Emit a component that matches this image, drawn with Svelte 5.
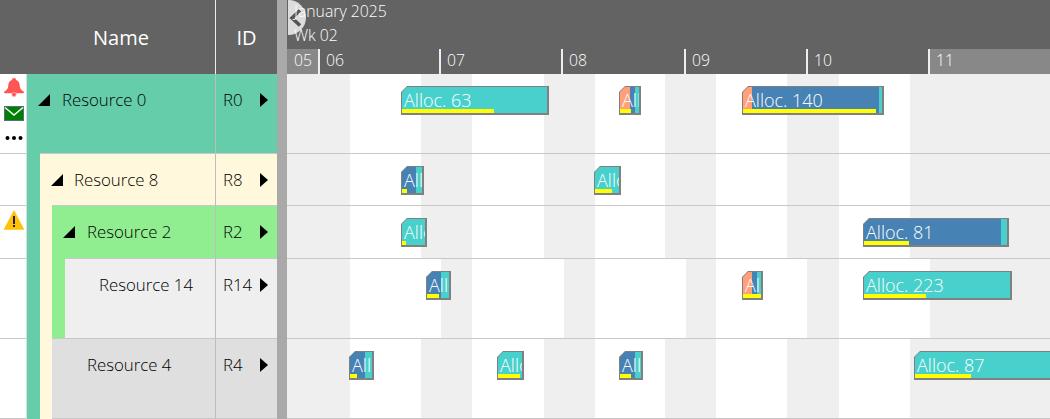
<script>
  const S = [[0, 63], [134, 51], [257, 51], [378, 51], [500, 52], [623, 140]];
  const S14 = [[0, 63], [154, 31], [277, 31], [399, 30], [520, 32], [643, 120]];
  const O = 287;
  const bar = (x, x2, label, prog, segs) => ({ x, w: x2 - x, label, prog, segs });
  const T = '#48d1cc', B = '#4682b4', P = '#ffa07a';
  const rows = [
    { name: 'Resource 0', id: 'R0', h: 79, cls: 'aqua', tree: true, bands: [], stripes: S, icons: true,
      bars: [bar(401, 549, 'Alloc. 63', 92, [[146, T]]),
             bar(619, 641, 'Alloc. 12', 11, [[10, P], [5, B], [4, T]]),
             bar(742, 884, 'Alloc. 140', 133, [[9, P], [127, B], [4, T]])] },
    { name: 'Resource 8', id: 'R8', h: 52, cls: 'silk', tree: true, bands: ['aqua'], stripes: S,
      bars: [bar(401, 424, 'Alloc. 7', 5, [[14, B], [7, T]]),
             bar(594, 621, 'Alloc. 24', 17, [[25, T]])] },
    { name: 'Resource 2', id: 'R2', h: 53, cls: 'green', tree: true, bands: ['aqua', 'silk'], warn: true, stripes: S,
      bars: [bar(401, 427, 'Alloc. 3', 4, [[24, T]]),
             bar(863, 1009, 'Alloc. 81', 45, [[137, B], [7, T]])] },
    { name: 'Resource 14', id: 'R14', h: 80, cls: 'light', bands: ['aqua', 'silk', 'green'], stripes: S14,
      bars: [bar(426, 451, 'Alloc. 11', 12, [[14, B], [8, T]]),
             bar(742, 763, 'Alloc. 19', 18, [[9, P], [5, B], [4, T]]),
             bar(863, 1012, 'Alloc. 223', 62, [[147, T]])] },
    { name: 'Resource 4', id: 'R4', h: 81, cls: 'mid', bands: ['aqua', 'silk'], stripes: S,
      bars: [bar(349, 374, 'Alloc. 6', 7, [[15, B], [8, T]]),
             bar(497, 524, 'Alloc. 31', 22, [[25, T]]),
             bar(619, 643, 'Alloc. 10', 11, [[15, B], [7, T]]),
             bar(914, 1080, 'Alloc. 87', 56, [[164, T]])] }
  ];
  const days = [
    { t: '05', w: 33, cur: true }, { t: '06', w: 121 }, { t: '07', w: 122 }, { t: '08', w: 123 },
    { t: '09', w: 122 }, { t: '10', w: 122 }, { t: '11', w: 120, cur: true }
  ];
</script>

<div class="gantt">
  <div class="tree">
    <div class="head">
      <div class="h-gap"></div>
      <div class="h-name">Name</div>
      <div class="h-id">ID</div>
    </div>
    {#each rows as r}
      <div class="row" style="height:{r.h}px">
        <div class="alerts">
          {#if r.icons}
            <svg class="bell" viewBox="0 0 20 19" width="20" height="19">
              <path d="M10 0c1.300 0 2 .8 2.100 2 2.500.8 3.400 2.700 3.600 5.200.2 2.700 1 4.700 3.800 6.300.4.300.5.8.5 1.500H0c0-.7.100-1.200.5-1.500 2.800-1.600 3.600-3.600 3.800-6.300.2-2.500 1.100-4.400 3.600-5.200C8 .8 8.700 0 10 0z" fill="#ff5555"/>
              <path d="M1 15.500h18" stroke="#ffc8c8" stroke-width="0.800"/>
              <circle cx="10" cy="16.500" r="2.200" fill="#ff5555" stroke="#ffc8c8" stroke-width="0.600"/>
            </svg>
            <svg class="mail" viewBox="0 0 20 15" width="20" height="15">
              <rect x="0.500" y="0.500" width="19" height="14" fill="#008000" stroke="#5a6a8a"/>
              <path d="M1 1.500l9 7.500 9-7.500" fill="none" stroke="#fff" stroke-width="1.500"/>
            </svg>
            <svg class="dots" viewBox="0 0 18 4" width="18" height="4">
              <circle cx="2.500" cy="2" r="2"/><circle cx="9" cy="2" r="2"/><circle cx="15.500" cy="2" r="2"/>
            </svg>
          {/if}
          {#if r.warn}
            <svg class="warn" viewBox="0 0 20 20" width="20" height="20">
              <path d="M10 .5L20 19.500H0z" fill="#ffc107" stroke="#ffc107" stroke-width="0.500" stroke-linejoin="round"/>
              <rect x="9" y="6" width="2" height="8" fill="#222"/>
              <rect x="9" y="15" width="2" height="2" fill="#222"/>
            </svg>
          {/if}
        </div>
        {#each r.bands as b}
          <div class="band {b}"></div>
        {/each}
        <div class="name {r.cls}">
          <span class="tri" class:none={!r.tree}></span>
          <span class="label">{r.name}</span>
        </div>
        <div class="id {r.cls}">
          <span class="idt">{r.id}</span>
          <span class="arrow"></span>
        </div>
      </div>
    {/each}
  </div>
  <div class="split"></div>
  <div class="chart">
    <div class="time">
      <div class="collapse">
        <svg viewBox="0 0 12 18" width="12" height="18"><path d="M11 1.500L3 9l8 7.500" fill="none" stroke="#555" stroke-width="3.500"/></svg>
      </div>
      <div class="t1">January 2025</div>
      <div class="t2">Wk 02</div>
      <div class="t3">
        {#each days as d}
          <div class="day" class:cur={d.cur} style="width:{d.w}px">{d.t}</div>
        {/each}
      </div>
    </div>
    {#each rows as r}
      <div class="lane" style="height:{r.h}px">
        {#each r.stripes as s}
          <div class="stripe" style="left:{s[0]}px;width:{s[1]}px"></div>
        {/each}
        {#each r.bars as b}
          <div class="bar" style="left:{b.x - O}px;width:{b.w}px">
            <div class="fill">
              {#each b.segs as sg}
                <i style="width:{sg[0]}px;background:{sg[1]}"></i>
              {/each}
              <span class="txt">{b.label}</span>
              <b class="prog" style="width:{b.prog}px"></b>
            </div>
          </div>
        {/each}
      </div>
    {/each}
  </div>
</div>

<style>
  :global(body) { margin: 0; background: #fff; overflow: hidden; }
  .gantt { display: flex; width: 1050px; height: 419px; overflow: hidden; font-family: "Open Sans", "Noto Sans", sans-serif; font-weight: 350; font-size: 16.800px; color: #000; }
  .tree { width: 277px; flex: none; }
  .split { width: 10px; flex: none; background: #a9a9a9; }
  .chart { width: 763px; flex: none; position: relative; overflow: hidden; }

  .head { height: 74px; display: flex; background: #636363; color: #fff; font-size: 20px; font-weight: 400; }
  .h-gap { width: 27px; }
  .h-name { width: 189px; box-sizing: border-box; display: flex; align-items: center; justify-content: center; border-right: 1px solid #eee; }
  .h-id { flex: 1; display: flex; align-items: center; justify-content: center; }

  .row { display: flex; }
  .row > * { box-sizing: border-box; }
  .row + .row > :not(.band) { border-top: 1px solid #c8c8c8; }
  .row:last-child > :not(.band) { border-bottom: 1px solid #c8c8c8; }
  .alerts { width: 27px; flex: none; background: #fff; border-right: 1px solid #ddd; padding-left: 1px; display: flex; flex-direction: column; align-items: center; }
  .bell { margin-top: 4px; display: block; flex: none; }
  .mail { margin-top: 9px; display: block; flex: none; }
  .dots { margin-top: 15px; display: block; flex: none; }
  .warn { margin-top: 4px; display: block; flex: none; }
  .band { width: 13px; flex: none; }
  .band:nth-of-type(3) { width: 12px; }
  .aqua { background: #66cdaa; }
  .silk { background: #fff8dc; }
  .green { background: #90ee90; }
  .light { background: #efefef; }
  .mid { background: #dfdfdf; }

  .name { flex: 1; min-width: 0; display: flex; align-items: flex-start; padding: 15px 0 0 11px; border-right: 1px solid #bdbdbd; }
  .tri { width: 0; height: 0; border-style: solid; border-width: 0 0 12px 12px; border-color: transparent transparent #000 transparent; margin: 5px 12px 0 0; flex: none; }
  .tri.none { border-color: transparent; }
  .label { line-height: 22px; white-space: nowrap; }
  .silk .label, .light .label { margin-left: -1px; }
  .id { width: 61px; flex: none; display: flex; align-items: flex-start; justify-content: space-between; padding: 15px 9px 0 7px; }
  .idt { line-height: 22px; }
  .arrow { width: 0; height: 0; border-style: solid; border-width: 7px 0 7px 8px; border-color: transparent transparent transparent #000; margin-top: 4px; flex: none; }

  .time { height: 74px; background: #636363; color: #fff; font-size: 15.800px; position: relative; }
  .t1 { height: 25px; line-height: 23px; padding-left: 7px; position: relative; }
  .t2 { height: 24px; line-height: 20px; padding-left: 7px; position: relative; }
  .t3 { height: 25px; display: flex; }
  .day { line-height: 22px; padding-left: 6px; box-sizing: border-box; border-right: 2px solid #eee; flex: none; }
  .day:first-child { padding-left: 7px; }
  .day:last-child { border-right: 0; }
  .day.cur { background: #888; }
  .collapse { position: absolute; left: 1px; top: 0; width: 18px; height: 35px; background: #dcdcdc; border-radius: 0 18px 18px 0; display: flex; align-items: center; }
  .collapse svg { margin-left: 1px; }

  .lane { position: relative; box-sizing: border-box; }
  .lane + .lane { border-top: 1px solid #c8c8c8; }
  .lane:last-child { border-bottom: 1px solid #c8c8c8; }
  .stripe { position: absolute; top: 0; bottom: 0; background: #efefef; }
  .bar { position: absolute; top: 12px; height: 29px; background: #808080; clip-path: polygon(6px 0, 100% 0, 100% 100%, 0 100%, 0 6px); }
  .fill { position: absolute; inset: 1px 2px 2px 1px; display: flex; overflow: hidden; clip-path: polygon(5px 0, 100% 0, 100% 100%, 0 100%, 0 5px); }
  .fill i { display: block; height: 100%; flex: none; }
  .txt { position: absolute; left: 2px; top: 0; font-size: 18px; line-height: 26px; color: #fff; white-space: nowrap; }
  .prog { position: absolute; left: 0; bottom: 0; height: 4px; background: #ff0; }
</style>
